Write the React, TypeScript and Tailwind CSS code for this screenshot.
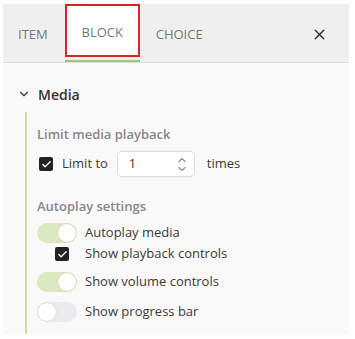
import { ChevronDown, ChevronUp, Check, X } from 'lucide-react';

const Toggle = ({ on }: { on: boolean }) => (
  <div
    className={`w-[40px] h-[20px] rounded-full flex items-center px-[1px] ${
      on ? 'bg-[#dce8c0] justify-end' : 'bg-[#ebebee] justify-start'
    }`}
  >
    <div className="w-[18px] h-[18px] rounded-full bg-white shadow-[0_0_2px_rgba(0,0,0,0.15)]" />
  </div>
);

const Box = () => (
  <div className="w-[14px] h-[14px] rounded-[2px] bg-[#222] flex items-center justify-center">
    <Check size={11} strokeWidth={3} className="text-white" />
  </div>
);

const App = () => {
  return (
    <div className="bg-white h-[339px] pt-[4px] pl-[3px] font-['Open_Sans',sans-serif] text-[13px] text-[#3a3a3a]">
      <div className="w-[346px] bg-[#f9f9f9]">
        <div className="flex h-[58px] bg-[#efeff0] text-[#777]">
          <div className="px-[15px] flex items-center pt-[4px]">ITEM</div>
          <div className="flex flex-col w-[75px] ml-[2px] border-b-[2px] border-[#a8c46a]">
            <div className="h-[53px] border-2 border-[#e0202a] bg-white flex items-center justify-center pt-[4px]">
              BLOCK
            </div>
          </div>
          <div className="px-[16px] flex items-center pt-[4px]">CHOICE</div>
          <div className="ml-auto mr-[21px] flex items-center text-[#333] pt-[3px]">
            <X size={17} strokeWidth={2} />
          </div>
        </div>
        <div className="h-px bg-[#dedede]" />

        <div className="pt-[19px]">
          <div className="flex items-center h-[24px] pl-[14px]">
            <ChevronDown size={14} strokeWidth={2} className="text-[#333]" />
            <span className="ml-[7px] text-[14px] font-semibold text-[#333]">Media</span>
          </div>

          <div className="ml-[22px] mt-[6px] border-l-[2px] border-[#cfdca0] pl-[10px] pt-[12px] pb-[12px]">
            <div className="h-[20px] leading-[20px] font-semibold text-[#888]">Limit media playback</div>
            <div className="flex items-center mt-[7px] h-[26px]">
              <div className="ml-[2px]">
                <Box />
              </div>
              <span className="ml-[9px]">Limit to</span>
              <div className="ml-[9px] w-[78px] h-[26px] bg-white border border-[#dcdcdc] rounded-[4px] flex items-center pl-[11px] pr-[6px]">
                <span>1</span>
                <div className="ml-auto flex flex-col items-center text-[#333] -space-y-[3px]">
                  <ChevronUp size={12} strokeWidth={2} />
                  <ChevronDown size={12} strokeWidth={2} />
                </div>
              </div>
              <span className="ml-[12px]">times</span>
            </div>

            <div className="mt-[19px] h-[20px] leading-[20px] font-semibold text-[#888]">Autoplay settings</div>

            <div className="flex items-center h-[20px] mt-[7px]">
              <Toggle on />
              <span className="ml-[8px]">Autoplay media</span>
            </div>
            <div className="flex items-center h-[20px] mt-[1px]">
              <div className="ml-[18px]">
                <Box />
              </div>
              <span className="ml-[16px]">Show playback controls</span>
            </div>
            <div className="flex items-center h-[20px] mt-[8px]">
              <Toggle on />
              <span className="ml-[8px]">Show volume controls</span>
            </div>
            <div className="flex items-center h-[20px] mt-[10px]">
              <Toggle on={false} />
              <span className="ml-[8px]">Show progress bar</span>
            </div>
          </div>
        </div>
      </div>
    </div>
  );
};

export default App;
